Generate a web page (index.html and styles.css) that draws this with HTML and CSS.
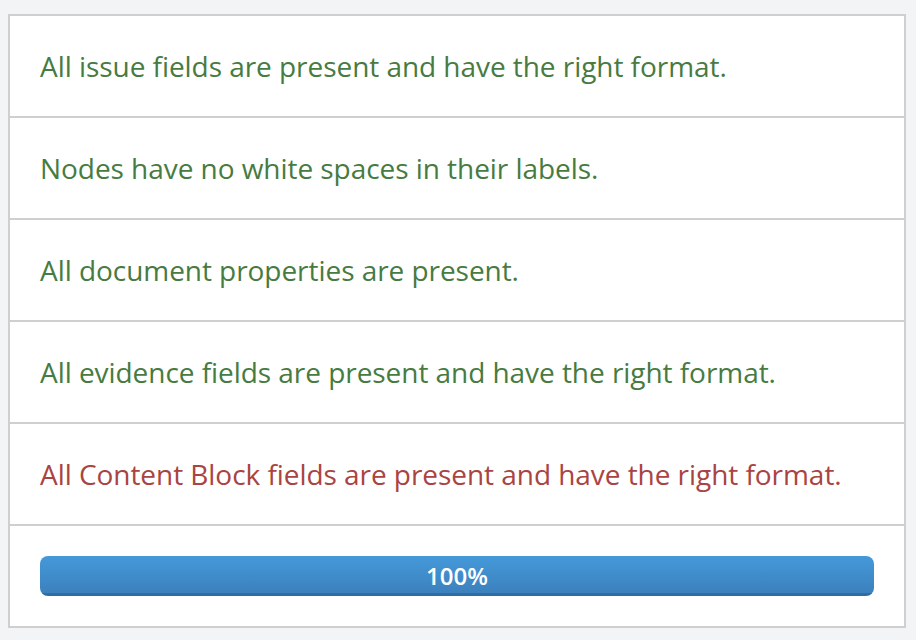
FILE: index.html
```html
<!DOCTYPE html>
<html>
<head>
<meta charset="utf-8">
<link rel="stylesheet" href="styles.css">
</head>
<body>
<ul class="checks">
  <li class="row ok">All issue fields are present and have the right format.</li>
  <li class="row ok">Nodes have no white spaces in their labels.</li>
  <li class="row ok">All document properties are present.</li>
  <li class="row ok">All evidence fields are present and have the right format.</li>
  <li class="row bad">All Content Block fields are present and have the right format.</li>
  <li class="row">
    <div class="progress"><div class="bar" style="width:100%">100%</div></div>
  </li>
</ul>
</body>
</html>
```
FILE: styles.css
```css
html, body { margin: 0; padding: 0; }
body {
  background: #f3f4f6;
  padding: 14px 10px 0 8px;
  font-family: "Open Sans", "Noto Sans", sans-serif;
}
.checks {
  list-style: none;
  margin: 0;
  padding: 0;
  background: #fff;
  border: 2px solid #cfcfcf;
}
.row {
  padding: 30px 30px;
  font-size: 28px;
  line-height: 40px;
  border-top: 2px solid #cfcfcf;
  letter-spacing: -0.05px;
}
.row:first-child { border-top: none; }
.ok { color: #477b41; }
.bad { color: #a94442; }
.progress {
  height: 40px;
  border-radius: 8px;
  background: #f5f5f5;
  overflow: hidden;
}
.bar {
  height: 100%;
  background: linear-gradient(to bottom, #4599d9 0%, #3a7fbb 100%);
  box-shadow: inset 0 -3px 0 rgba(0,0,0,.15);
  color: #fff;
  text-align: center;
  font-size: 24px;
  font-weight: 600;
  line-height: 40px;
  letter-spacing: 0;
}
```
